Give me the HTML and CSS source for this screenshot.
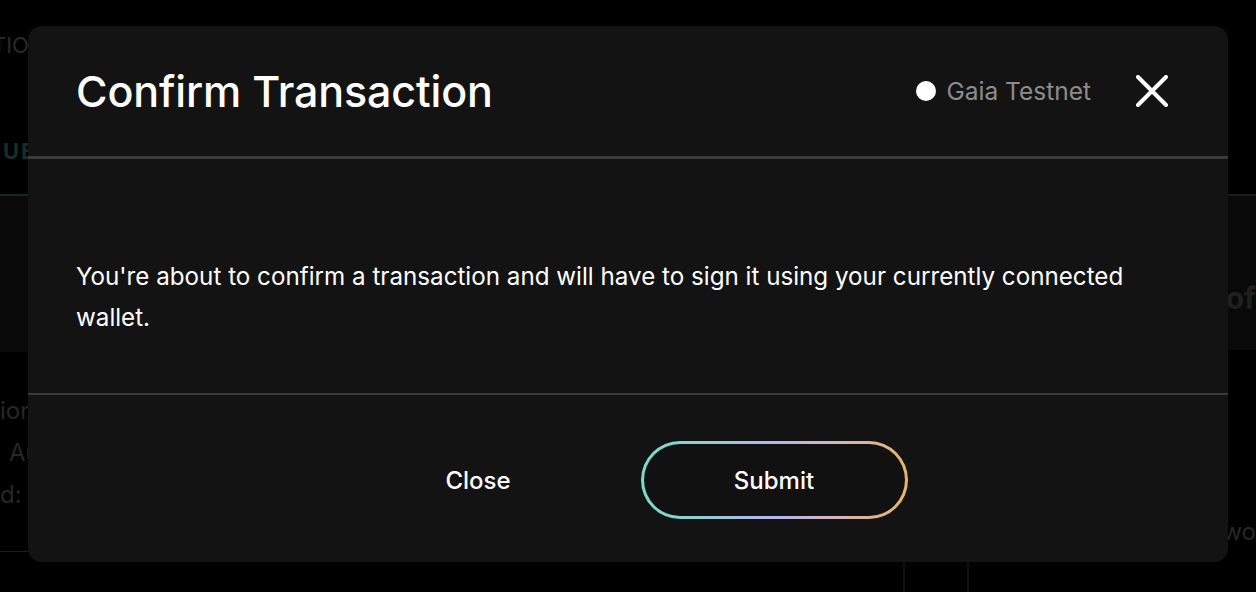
FILE: index.html
```html
<!DOCTYPE html>
<html lang="en">
<head>
<meta charset="utf-8">
<title>Confirm Transaction</title>
<link rel="stylesheet" href="styles.css">
</head>
<body>
<div class="page">
  <div class="bg-top"><span class="bg-heading">TIO</span></div>
  <div class="bg-tabs"><span class="bg-tab">UE</span></div>
  <div class="bg-cards">
    <div class="bg-card-left"></div>
    <div class="bg-card-right"><span class="bg-of">of</span></div>
  </div>
  <div class="bg-list">
    <div class="bg-list-left">
      <div class="bg-row">ion</div>
      <div class="bg-row bg-row-indent">Au</div>
      <div class="bg-row">d: n</div>
    </div>
    <div class="bg-list-right"><span class="bg-lwo">lwo</span></div>
  </div>
  <div class="bg-bottom">
    <div class="bg-cell-a"></div>
    <div class="bg-cell-b"></div>
    <div class="bg-cell-c"></div>
  </div>
</div>

<div class="modal">
  <div class="modal-header">
    <h1 class="modal-title">Confirm Transaction</h1>
    <div class="header-right">
      <div class="network"><span class="network-dot"></span><span class="network-name">Gaia Testnet</span></div>
      <button class="close-x" aria-label="Close">
        <svg width="32" height="32" viewBox="0 0 32 32"><path d="M2 2 L30 30 M30 2 L2 30" stroke="#fff" stroke-width="4" stroke-linecap="round"/></svg>
      </button>
    </div>
  </div>
  <div class="modal-body">
    <p class="modal-text">You're about to confirm a transaction and will have to sign it using your currently connected wallet.</p>
  </div>
  <div class="modal-footer">
    <button class="btn btn-close">Close</button>
    <button class="btn btn-submit">Submit</button>
  </div>
</div>
</body>
</html>
```
FILE: styles.css
```css
* { box-sizing: border-box; }
html, body { margin: 0; padding: 0; }
body {
  background: #000;
  width: 1256px;
  height: 592px;
  overflow: hidden;
  font-family: Inter, "Liberation Sans", sans-serif;
  position: relative;
}
.page {
  width: 1256px;
  height: 592px;
  display: flex;
  flex-direction: column;
}
.bg-top {
  height: 120px;
  padding-top: 32px;
}
.bg-heading {
  display: inline-block;
  margin-left: -8px;
  font-size: 22px;
  color: #2a2a2a;
}
.bg-tabs {
  height: 76px;
  padding-top: 18px;
  border-bottom: 2px solid #1c1c1c;
}
.bg-tab {
  display: inline-block;
  padding-left: 3px;
  font-size: 22px;
  font-weight: 700;
  color: #13302b;
  letter-spacing: 2px;
  padding-bottom: 30px;
  border-bottom: 3px solid #0f2b26;
  width: 160px;
}
.bg-cards {
  height: 156px;
  display: flex;
  justify-content: space-between;
}
.bg-card-left {
  width: 300px;
  background: #0a0a0a;
}
.bg-card-right {
  width: 300px;
  background: #090909;
  display: flex;
  align-items: center;
  justify-content: flex-end;
  padding-top: 50px;
  margin-bottom: 2px;
}
.bg-of {
  font-size: 30px;
  font-weight: 700;
  color: #202020;
}
.bg-list {
  height: 210px;
  display: flex;
  justify-content: space-between;
}
.bg-list-left {
  width: 300px;
  height: 200px;
  padding-top: 38px;
  border-bottom: 1px solid #1c1c1c;
}
.bg-row {
  font-size: 24px;
  color: #272727;
  line-height: 42px;
}
.bg-row-indent { padding-left: 9px; }
.bg-list-right {
  width: 200px;
  display: flex;
  justify-content: flex-end;
  align-items: flex-end;
  padding-bottom: 16px;
}
.bg-lwo {
  font-size: 24px;
  color: #272727;
}
.bg-bottom {
  flex: 1;
  display: flex;
}
.bg-cell-a { width: 903px; }
.bg-cell-b { width: 64px; border-left: 2px solid #111; }
.bg-cell-c { flex: 1; border-left: 2px solid #111; }

.modal {
  position: absolute;
  left: 28px;
  top: 26px;
  width: 1200px;
  height: 536px;
  background: #131313;
  border-radius: 14px;
  display: flex;
  flex-direction: column;
}
.modal-header {
  height: 133px;
  border-bottom: 3px solid #3c3c3c;
  display: flex;
  align-items: center;
  justify-content: space-between;
  padding: 0 60px 0 48px;
}
.modal-title {
  margin: 0;
  font-size: 43px;
  font-weight: 500;
  color: #fff;
  letter-spacing: -0.15px;
}
.header-right {
  display: flex;
  align-items: center;
  gap: 45px;
}
.network {
  display: flex;
  align-items: center;
  gap: 10px;
}
.network-dot {
  width: 20px;
  height: 20px;
  border-radius: 50%;
  background: #fff;
}
.network-name {
  font-size: 24.5px;
  color: #8c8c8c;
}
.close-x {
  background: none;
  border: 0;
  padding: 0;
  width: 32px;
  height: 32px;
  display: block;
  cursor: pointer;
}
.close-x svg { display: block; }
.modal-body {
  height: 236px;
  border-bottom: 2px solid #3a3a3a;
  padding: 97px 49px 0 48px;
}
.modal-text {
  margin: 0;
  font-size: 24.2px;
  line-height: 41px;
  color: #fff;
}
.modal-footer {
  flex: 1;
  display: flex;
  align-items: center;
  justify-content: center;
  gap: 28px;
  padding-right: 3px;
  padding-top: 2px;
}
.btn {
  width: 267px;
  height: 78px;
  border-radius: 39px;
  font-family: Inter, "Liberation Sans", sans-serif;
  font-size: 24px;
  font-weight: 500;
  color: #fff;
  cursor: pointer;
  padding: 0;
}
.btn-close {
  background: transparent;
  border: 3px solid transparent;
  padding-top: 2px;
  padding-right: 2px;
}
.btn-submit {
  border: 3px solid transparent;
  padding-top: 2px;
  background:
    linear-gradient(#111, #111) padding-box,
    linear-gradient(90deg, #7cdac8 0%, #8fd0d2 22%, #b2b6f0 48%, #d2b3c4 70%, #e8b46c 100%) border-box;
}
```
